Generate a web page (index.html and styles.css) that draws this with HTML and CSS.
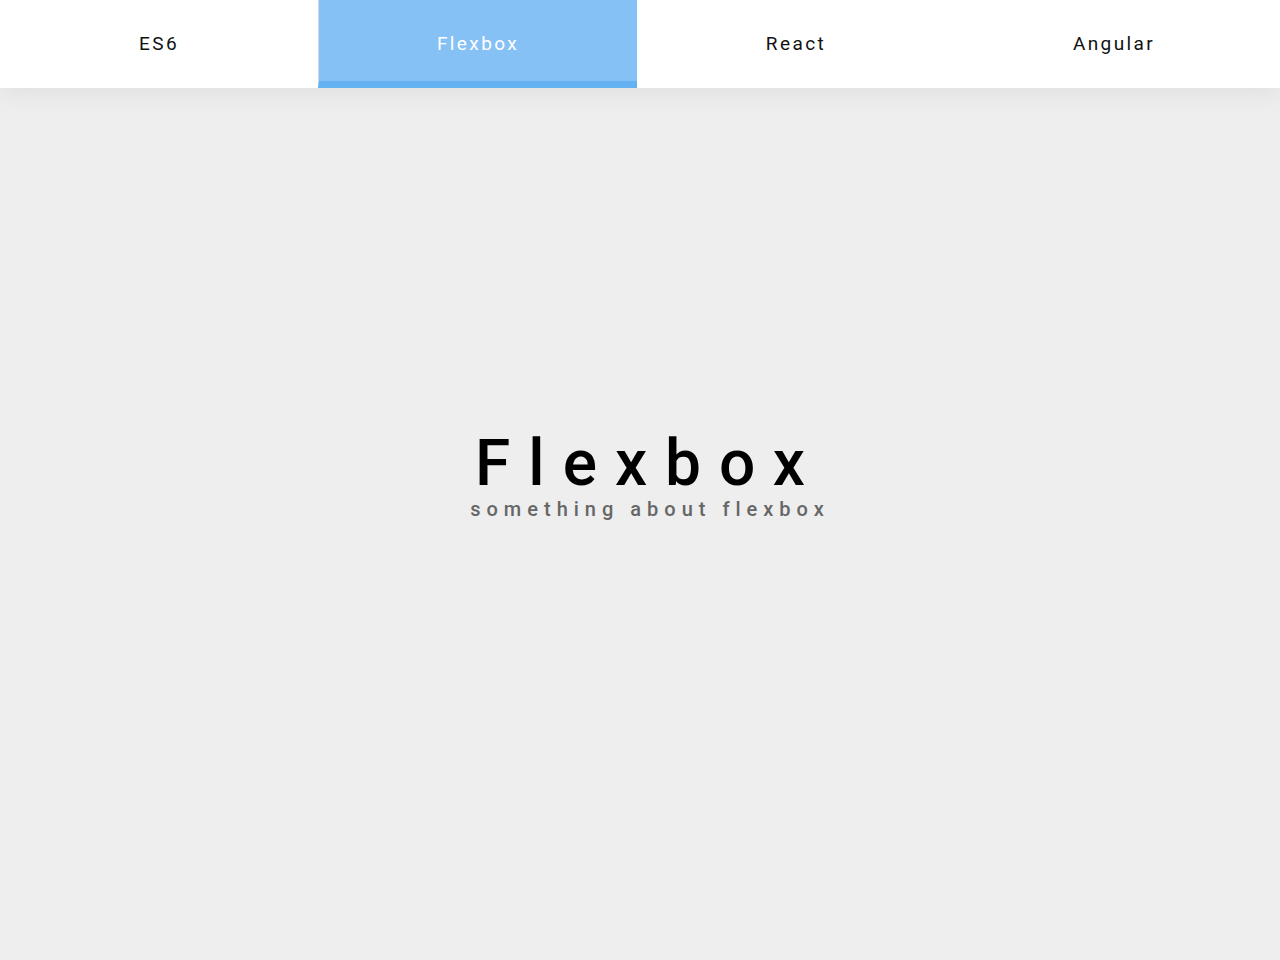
FILE: index.html
```html
<!DOCTYPE html>
<html>
<head>
<meta charset="utf-8">
<link rel="stylesheet" href="styles.css">
</head>
<body>
<nav class="tabs">
  <a class="tab">ES6</a>
  <a class="tab active">Flexbox</a>
  <a class="tab">React</a>
  <a class="tab">Angular</a>
</nav>
<main class="content">
  <div class="hero">
    <h1 class="title">Flexbox</h1>
    <p class="subtitle">something about flexbox</p>
  </div>
</main>
</body>
</html>
```
FILE: styles.css
```css
html, body {
  margin: 0;
  padding: 0;
  height: 100%;
}
body {
  background: #eeeeee;
  font-family: Roboto, "Liberation Sans", sans-serif;
  display: flex;
  flex-direction: column;
}
.tabs {
  display: flex;
  height: 88px;
  background: #ffffff;
  box-shadow: 0 2px 30px rgba(0,0,0,0.08);
  position: relative;
  z-index: 1;
}
.tab {
  flex: 0 0 318px;
  display: flex;
  align-items: center;
  justify-content: center;
  font-size: 19px;
  letter-spacing: 2.4px;
  color: #111;
  box-sizing: border-box;
  padding-bottom: 1px;
}
.tab.active {
  flex-basis: 319px;
  background: #86c1f5;
  color: #ffffff;
  border-bottom: 7px solid #64b2f2;
  padding-top: 6px;
  padding-bottom: 0;
  border-left: 1px solid #c8d8e8;
}
.content {
  flex: 1;
  display: flex;
  align-items: center;
  justify-content: center;
  padding-bottom: 92px;
}
.hero {
  text-align: center;
}
.title {
  margin: 0;
  font-size: 64px;
  font-weight: 500;
  letter-spacing: 18px;
  margin-right: -18px;
  color: #000;
  line-height: 62px;
}
.subtitle {
  margin: 0 -6px 0 0;
  padding-left: 14px;
  font-size: 20px;
  font-weight: 500;
  letter-spacing: 6px;
  color: #666;
  line-height: 28px;
}
```
